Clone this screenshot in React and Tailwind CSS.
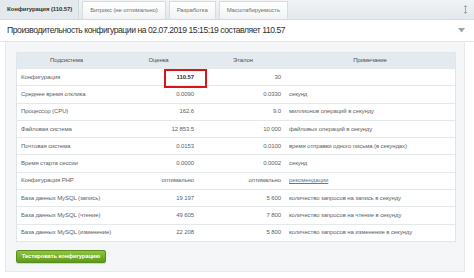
import React from "react";

const rows = [
  ["Конфигурация", "110.57", "30", "", true],
  ["Среднее время отклика", "0.0090", "0.0330", "секунд"],
  ["Процессор (CPU)", "162.6", "9.0", "миллионов операций в секунду"],
  ["Файловая система", "12 853.5", "10 000", "файловых операций в секунду"],
  ["Почтовая система", "0.0153", "0.0100", "время отправки одного письма (в секундах)"],
  ["Время старта сессии", "0.0000", "0.0002", "секунд"],
  ["Конфигурация PHP", "оптимально", "оптимально", "рекомендации", false, true],
  ["База данных MySQL (запись)", "19 197", "5 600", "количество запросов на запись в секунду"],
  ["База данных MySQL (чтение)", "49 605", "7 800", "количество запросов на чтение в секунду"],
  ["База данных MySQL (изменение)", "22 208", "5 800", "количество запросов на изменение в секунду"],
];

const tabs = [
  ["Конфигурация (110.57)", true],
  ["Битрикс (не оптимально)", false],
  ["Разработка", false],
  ["Масштабируемость", false],
];

export default function App() {
  return (
    <div
      className="w-[474px] h-[278px] bg-white overflow-hidden"
      style={{ fontFamily: '"Liberation Sans", Arial, sans-serif' }}
    >
      {/* tab bar */}
      <div className="h-[20px] flex items-end bg-gradient-to-b from-[#f1f4f5] to-[#e2e8eb] border-b border-[#d3dadd] pr-[6px]">
        <div className="flex items-end gap-[3px] h-full">
          {tabs.map(([t, active]) =>
            active ? (
              <div
                key={t}
                className="h-full flex items-center pl-[7px] pr-[6px] bg-[#e3e9ec] border-r border-[#d3dadd] text-[6px] tracking-[-0.1px] font-bold text-[#333] whitespace-nowrap"
              >
                {t}
              </div>
            ) : (
              <div
                key={t}
                className="h-[18px] flex items-center px-[7px] bg-gradient-to-b from-white to-[#f0f3f4] border border-b-0 border-[#d6dde0] text-[6px] tracking-[-0.1px] text-[#6b7377] whitespace-nowrap"
              >
                {t}
              </div>
            )
          )}
        </div>
        <div className="ml-auto h-full flex items-center">
          <svg width="5" height="9" viewBox="0 0 5 9">
            <path d="M2.5 0.5v8M1 2l1.5-1.5L4 2M1 7l1.5 1.5L4 7" stroke="#9aa3a7" strokeWidth="0.9" fill="none" />
          </svg>
        </div>
      </div>

      {/* title */}
      <div className="h-[22px] flex items-center pl-[7px] pr-[9px] border-b border-[#e1e6e8]">
        <div className="text-[8.6px] tracking-[-0.45px] text-[#2f2f2f] whitespace-nowrap">
          Производительность конфигурации на 02.07.2019 15:15:19 составляет 110.57
        </div>
        <svg className="ml-auto" width="7" height="5" viewBox="0 0 7 5">
          <path d="M0 0h7L3.5 4.5z" fill="#9ba4a8" />
        </svg>
      </div>

      {/* content */}
      <div className="ml-[5px] w-[460px] h-[230px] bg-[#f4f6f7] border border-t-0 border-[#e6eaec] pt-[10px] pl-[10px]">
        <div className="w-[440px] bg-white border border-[#dfe5e8] text-[6px] tracking-[-0.1px] text-[#5b6366] whitespace-nowrap">
          <div className="grid grid-cols-[99px_85px_84px_1fr] h-[15px] bg-[#e4eaed] text-[#4a5256]">
            <div className="flex items-center justify-center">Подсистема</div>
            <div className="flex items-center justify-center">Оценка</div>
            <div className="flex items-center justify-center">Эталон</div>
            <div className="flex items-center justify-center">Примечание</div>
          </div>
          {rows.map(([a, b, c, d, hl, link]) => (
            <div
              key={a}
              className="grid grid-cols-[99px_85px_84px_1fr] h-[17.3px] border-t border-[#e3e8ea]"
            >
              <div className="flex items-center pl-[4px]">{a}</div>
              <div className="relative flex items-center justify-end pr-[7px]">
                {hl ? (
                  <>
                    <span className="font-bold text-[#333]">{b}</span>
                    <div className="absolute left-[48px] top-[0px] w-[43px] h-[19px] border-[2px] border-[#d9141b]" />
                  </>
                ) : (
                  b
                )}
              </div>
              <div className="flex items-center justify-end pr-[4px]">{c}</div>
              <div className="flex items-center pl-[4px]">
                {link ? <span className="text-[#4a7fb0] underline">{d}</span> : d}
              </div>
            </div>
          ))}
        </div>
        <div className="mt-[8px] w-[90px] h-[13px] rounded-[2px] bg-gradient-to-b from-[#8ec63f] to-[#5f9a1c] border border-[#5a8d1d] flex items-center justify-center text-[5.8px] tracking-[-0.1px] font-bold text-white whitespace-nowrap shadow-[0_1px_1px_rgba(0,0,0,0.15)]">
          Тестировать конфигурацию
        </div>
      </div>
    </div>
  );
}
